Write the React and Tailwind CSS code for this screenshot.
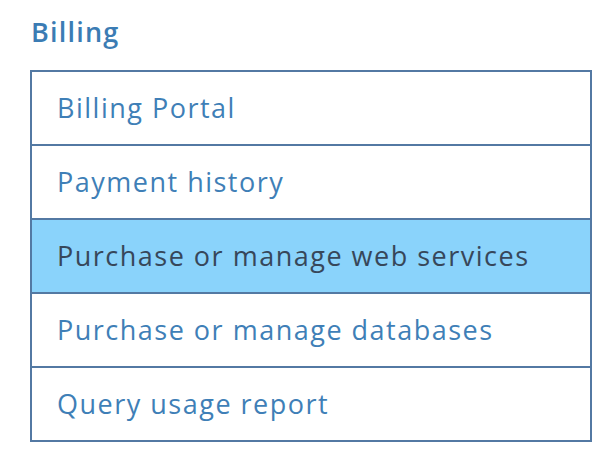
import React from "react";

const items = [
  "Billing Portal",
  "Payment history",
  "Purchase or manage web services",
  "Purchase or manage databases",
  "Query usage report",
];

export default function App() {
  const active = 2;
  return (
    <div className="w-[616px] h-[460px] bg-white pl-[30px] pt-[13px] font-['Open_Sans',sans-serif]">
      <h2 className="text-[27px] leading-[38px] font-semibold tracking-[1.2px] text-[#3b7cb4] pl-px">Billing</h2>
      <ul className="mt-[19px] w-[562px] border-2 border-[#5379a3]">
        {items.map((label, i) => (
          <li
            key={label}
            className={
              "flex items-center pl-[25px] pt-px text-[27px] tracking-[1.5px] border-[#5379a3] " +
              (i > 0 ? "h-[74px] border-t-2 " : "h-[72px] ") +
              (i === active ? "bg-[#8ad3fb] text-[#37475a]" : "text-[#3f7fb7]")
            }
          >
            {label}
          </li>
        ))}
      </ul>
    </div>
  );
}
